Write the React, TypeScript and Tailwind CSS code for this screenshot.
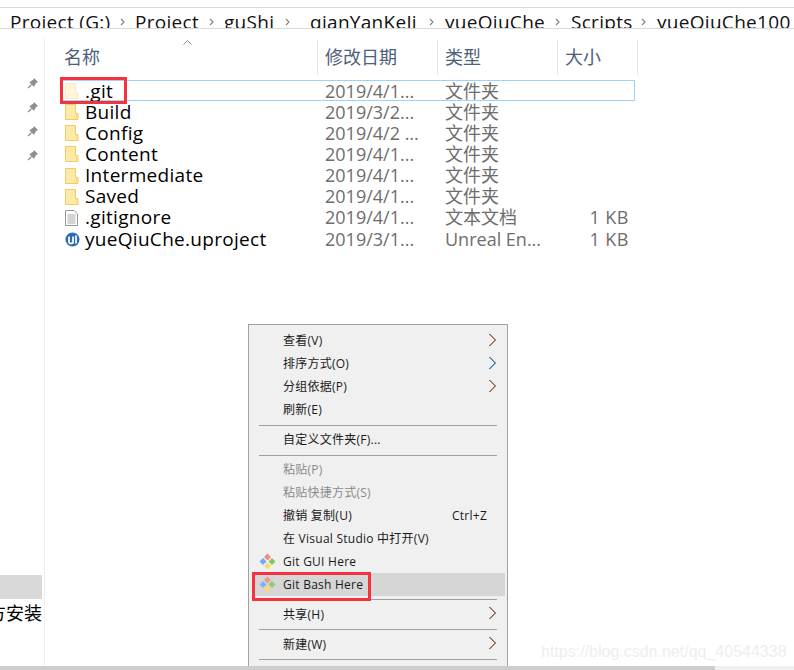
import React from 'react';

const uiFont = { fontFamily: '"Open Sans", "Noto Sans", "Noto Sans CJK SC", sans-serif' };

const files = [
  { name: '.git', date: '2019/4/1...', type: '文件夹', size: '', icon: 'ghost' },
  { name: 'Build', date: '2019/3/2...', type: '文件夹', size: '', icon: 'folder' },
  { name: 'Config', date: '2019/4/2 ...', type: '文件夹', size: '', icon: 'folder' },
  { name: 'Content', date: '2019/4/1...', type: '文件夹', size: '', icon: 'folder' },
  { name: 'Intermediate', date: '2019/4/1...', type: '文件夹', size: '', icon: 'folder' },
  { name: 'Saved', date: '2019/4/1...', type: '文件夹', size: '', icon: 'folder' },
  { name: '.gitignore', date: '2019/4/1...', type: '文本文档', size: '1 KB', icon: 'text' },
  { name: 'yueQiuChe.uproject', date: '2019/3/1...', type: 'Unreal En...', size: '1 KB', icon: 'unreal' },
];

const crumbs = [
  { label: 'Project (G:)', cls: 'w-[125px] pr-[10px]' },
  { label: 'Project', cls: 'w-[89px] pr-[10px]' },
  { label: 'guShi', cls: 'w-[86px] pr-[20px]' },
  { label: 'qianYanKeJi', cls: 'w-[135px] pr-[11px]' },
  { label: 'yueQiuChe', cls: 'w-[126px] pr-[11px]' },
  { label: 'Scripts', cls: 'w-[86px] pr-[11px]' },
  { label: 'yueQiuChe100', cls: 'w-[137px]' },
];

function FolderIcon({ faded }: { faded?: boolean }) {
  return (
    <svg width="14" height="16" viewBox="0 0 14 16" className={faded ? 'opacity-40' : ''}>
      <path d="M0.5 0.5H10.5V9.5H13V15.5H0.5Z" fill="#fee9a6" stroke="#f0cc68" />
      <path d="M11 10V15H13V10Z" fill="#f9dc86" />
    </svg>
  );
}

function TextIcon() {
  return (
    <svg width="13" height="16" viewBox="0 0 13 16">
      <path d="M0.5 0.5H9L12.5 4V15.5H0.5Z" fill="#fff" stroke="#969696" />
      <path d="M2.5 5H10.5M2.5 7H10.5M2.5 9H10.5M2.5 11H10.5M2.5 13H10.5" stroke="#a8a8a8" />
    </svg>
  );
}

function UnrealIcon() {
  return (
    <svg width="15" height="15" viewBox="0 0 15 15">
      <circle cx="7.5" cy="7.5" r="7" fill="#2a6cb4" />
      <path d="M4 4.5V9.5Q4 11.5 6 11.5Q8 11.5 8 9.5V4.5M8 9V11.5M11 3.5V11.5" fill="none" stroke="#fff" strokeWidth="1.7" />
    </svg>
  );
}

function FileIcon({ kind }: { kind: string }) {
  if (kind === 'text') return <TextIcon />;
  if (kind === 'unreal') return <UnrealIcon />;
  return <FolderIcon faded={kind === 'ghost'} />;
}

function PinIcon() {
  return (
    <svg width="12" height="12" viewBox="0 0 12 12">
      <path d="M7 1L11 5L9.6 5.6L7.6 8.6L7 10L2.4 5.2L3.6 4.6L6.4 2.4Z" fill="#8b9097" />
      <path d="M4.5 7.5L1 11" stroke="#8b9097" strokeWidth="1.2" />
    </svg>
  );
}

function GitIcon({ dim }: { dim?: boolean }) {
  return (
    <svg width="17" height="17" viewBox="0 0 17 17" className={dim ? 'opacity-80' : ''}>
      <path d="M8.5 0.5L12 4L8.5 7.5L5 4Z" fill="#f28b82" />
      <path d="M4 5L7.5 8.5L4 12L0.5 8.5Z" fill="#6ea8fa" />
      <path d="M13 5L16.5 8.5L13 12L9.5 8.5Z" fill="#86c85a" />
      <path d="M8.5 9.5L12 13L8.5 16.5L5 13Z" fill="#fbdc6a" />
    </svg>
  );
}

function Chevron({ blue }: { blue?: boolean }) {
  return (
    <svg width="9" height="14" viewBox="0 0 9 14">
      <path d="M1 1L7 7L1 13" fill="none" stroke={blue ? '#5a90c8' : '#c98a50'} strokeWidth="1" />
      <path d="M1.6 1L7.6 7L1.6 13" fill="none" stroke={blue ? '#2c5f96' : '#5a4a48'} strokeWidth="1" />
    </svg>
  );
}

function CrumbArrow() {
  return (
    <svg width="5" height="8" viewBox="0 0 5 8" className="ml-auto shrink-0">
      <path d="M1 1L4 4L1 7" fill="none" stroke="#858585" strokeWidth="1.2" />
    </svg>
  );
}

function Separator() {
  return <div className="h-px bg-[#a0a0a0] mx-[10px] my-[3px]" />;
}

function MenuItem({ label, disabled, arrow, blue, shortcut, git, active }: {
  label: string;
  disabled?: boolean;
  arrow?: boolean;
  blue?: boolean;
  shortcut?: string;
  git?: boolean;
  active?: boolean;
}) {
  return (
    <div className={`h-[22.95px] flex items-center text-[12px] tracking-[0.25px] ml-[3px] mr-[2px] ${active ? 'bg-[#d6d6d6]' : ''} ${disabled ? 'text-[#8a8a8a]' : 'text-[#1a1a1a]'}`}>
      <div className="w-[31px] pl-[7px] shrink-0 flex">{git && <GitIcon dim={active} />}</div>
      <span className="flex-1">{label}</span>
      {shortcut && <span className="mr-[18px]">{shortcut}</span>}
      {arrow && <span className="mr-[8px] mt-[-3px] flex items-center"><Chevron blue={blue} /></span>}
    </div>
  );
}

export default function App() {
  return (
    <div className="relative w-[794px] h-[670px] bg-white overflow-hidden flex flex-col" style={uiFont}>
      {/* Address bar, cut off at the bottom */}
      <div className="mt-[7px] h-[22px] border-t border-b border-[#d9d9d9] overflow-hidden flex items-start pl-[10px] box-border shrink-0">
        {crumbs.map((c, i) => (
          <div key={c.label} className={`${c.cls} shrink-0 flex items-center text-[19px] tracking-[0.3px] leading-[28px] text-[#111] whitespace-nowrap box-border`}>
            <span>{c.label}</span>
            {i < crumbs.length - 1 && <CrumbArrow />}
          </div>
        ))}
      </div>

      <div className="flex flex-1 min-h-0">
        {/* Quick access strip */}
        <aside className="w-[45px] mt-[8px] border-r border-[#efefef] flex flex-col items-end shrink-0 box-border">
          <div className="flex flex-col gap-[12px] mt-[40px] pr-[5px]">
            <PinIcon />
            <PinIcon />
            <PinIcon />
            <PinIcon />
          </div>
          <div className="w-[42px] h-[24px] bg-[#d9d9d9] mt-[414px] mr-[2px]" />
          <div className="w-[42px] mr-[2px] mt-[2px] overflow-hidden flex justify-end whitespace-nowrap text-[18px] leading-[24px] text-black">方安装</div>
        </aside>

        {/* File list */}
        <main className="relative flex-1 min-w-0 pt-[11px]">
          <div className="flex h-[35px] text-[18px] text-[#4c607a]">
            <div className="w-[273px] pl-[19px] border-r border-[#e5e5e5] leading-[35px]">名称</div>
            <div className="w-[120px] pl-[7px] border-r border-[#e5e5e5] leading-[35px]">修改日期</div>
            <div className="w-[120px] pl-[7px] border-r border-[#e5e5e5] leading-[35px]">类型</div>
            <div className="w-[80px] pl-[7px] border-r border-[#e5e5e5] leading-[35px]">大小</div>
          </div>
          <svg width="9" height="5" viewBox="0 0 9 5" className="absolute left-[138px] top-[11px]">
            <path d="M0.5 4.5L4.5 0.5L8.5 4.5" fill="none" stroke="#8a8a8a" />
          </svg>

          <div className="mt-[5px] ml-[16px] w-[574px]">
            {files.map((f, i) => (
              <div
                key={f.name}
                className={`flex items-center h-[21.15px] pt-[1px] text-[18px] leading-[21px] whitespace-nowrap box-border ${i === 0 ? 'border border-[#99d1ff]' : ''}`}
              >
                <div className={`w-[24px] shrink-0 flex pl-[4px] ${i === 0 ? 'ml-[-1px]' : ''}`}>
                  <FileIcon kind={f.icon} />
                </div>
                <div className="w-[240px] text-black text-[19px] tracking-[0.3px]">{f.name}</div>
                <div className="w-[120px] text-[#6d6d6d]">{f.date}</div>
                <div className="w-[120px] text-[#6d6d6d]">{f.type}</div>
                <div className="w-[64px] text-right text-[#6d6d6d] tracking-[0.5px]">{f.size}</div>
              </div>
            ))}
          </div>
        </main>
      </div>

      {/* Horizontal scrollbar */}
      <div className="h-[4px] flex shrink-0">
        <div className="w-[715px] bg-[#cdcdcd]" />
        <div className="flex-1 bg-[#f0f0f0]" />
      </div>

      {/* Context menu */}
      <div className="absolute left-[248px] top-[324px] w-[260px] h-[342px] bg-[#f0f0f0] border border-[#a0a0a0] border-b-0 pt-[5px] box-border overflow-hidden">
        <MenuItem label="查看(V)" arrow />
        <MenuItem label="排序方式(O)" arrow blue />
        <MenuItem label="分组依据(P)" arrow />
        <MenuItem label="刷新(E)" />
        <Separator />
        <MenuItem label="自定义文件夹(F)..." />
        <Separator />
        <MenuItem label="粘贴(P)" disabled />
        <MenuItem label="粘贴快捷方式(S)" disabled />
        <MenuItem label="撤销 复制(U)" shortcut="Ctrl+Z" />
        <MenuItem label="在 Visual Studio 中打开(V)" />
        <MenuItem label="Git GUI Here" git />
        <MenuItem label="Git Bash Here" git active />
        <Separator />
        <MenuItem label="共享(H)" arrow />
        <Separator />
        <MenuItem label="新建(W)" arrow />
        <Separator />
      </div>

      {/* Red annotation boxes */}
      <div className="absolute left-[60px] top-[77px] w-[67px] h-[27px] border-[3px] border-[#f5333f]" />
      <div className="absolute left-[252px] top-[572px] w-[119px] h-[29px] border-[3px] border-[#f5333f]" />

      {/* Watermark */}
      <div className="absolute left-[541px] top-[642px] text-[16px] leading-[20px] text-[#eeeeee]" style={{ fontFamily: '"Liberation Sans", sans-serif' }}>
        https://blog.csdn.net/qq_40544338
      </div>
    </div>
  );
}
